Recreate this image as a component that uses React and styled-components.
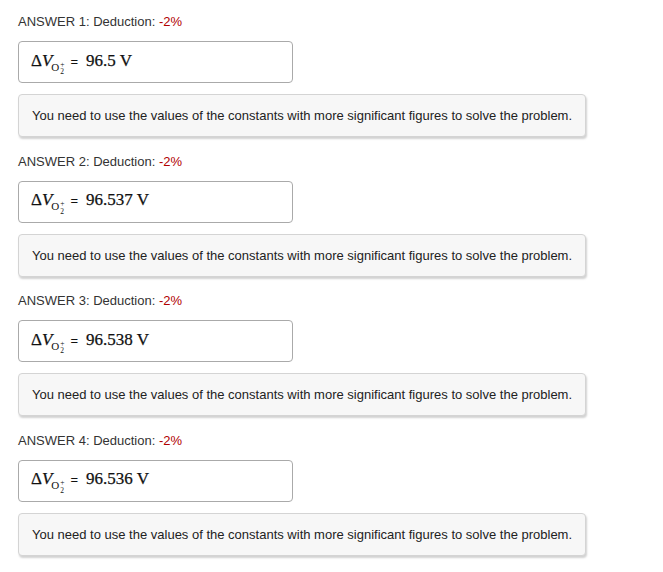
import React from "react"
import styled, { createGlobalStyle } from "styled-components"

const GlobalStyle = createGlobalStyle`
  body {
    margin: 0;
    background: #fff;
    font-family: "Liberation Sans", Arial, sans-serif;
    color: #333;
  }
`

const Page = styled.div`
  padding: 13px 0 0 18px;
  width: 568px;
`

const Section = styled.div`
  margin-bottom: 15.5px;
`

const Label = styled.div`
  font-size: 13px;
  line-height: 18px;
  color: #333;
`

const Deduction = styled.span`
  color: #b00000;
`

const AnswerBox = styled.div`
  margin-top: 10px;
  width: 275px;
  height: 42px;
  box-sizing: border-box;
  border: 1px solid #aaa;
  border-radius: 4px;
  display: flex;
  align-items: center;
  padding-left: 12px;
`

const Math = styled.span`
  font-family: "Liberation Serif", "Times New Roman", serif;
  font-size: 17px;
  color: #111;
  display: inline-flex;
  align-items: baseline;
  margin-top: -3px;
  -webkit-text-stroke: 0.25px #111;
`

const Var = styled.i`
  font-style: italic;
`

const Sub = styled.span`
  display: inline-flex;
  align-items: flex-start;
  font-size: 11px;
  position: relative;
  top: 5px;
  margin-left: -1px;
  -webkit-text-stroke: 0;
`

const Scripts = styled.span`
  display: inline-flex;
  flex-direction: column;
  font-size: 7.5px;
  line-height: 7.5px;
  margin-left: 1px;
`

const Equals = styled.span`
  font-family: "Liberation Sans", Arial, sans-serif;
  font-size: 13px;
  margin: 0 8px 0 6px;
  -webkit-text-stroke: 0;
`

const Feedback = styled.div`
  margin-top: 11px;
  width: 568px;
  height: 43px;
  box-sizing: border-box;
  border: 1px solid #d4d4d4;
  border-radius: 4px;
  background: #f7f7f7;
  box-shadow: 1px 2px 2px rgba(0, 0, 0, 0.18);
  display: flex;
  align-items: center;
  padding-left: 13px;
  font-size: 13px;
  color: #222;
`

const answers = ["96.5", "96.537", "96.538", "96.536"]

const Answer = ({ n, value }) => (
  <Section>
    <Label>
      ANSWER {n}: Deduction: <Deduction>-2%</Deduction>
    </Label>
    <AnswerBox>
      <Math>
        Δ<Var>V</Var>
        <Sub>
          O
          <Scripts>
            <span>+</span>
            <span>2</span>
          </Scripts>
        </Sub>
        <Equals>=</Equals>
        {value} V
      </Math>
    </AnswerBox>
    <Feedback>
      You need to use the values of the constants with more significant figures to solve the problem.
    </Feedback>
  </Section>
)

export default function App() {
  return (
    <Page>
      <GlobalStyle />
      {answers.map((v, i) => (
        <Answer key={i} n={i + 1} value={v} />
      ))}
    </Page>
  )
}
